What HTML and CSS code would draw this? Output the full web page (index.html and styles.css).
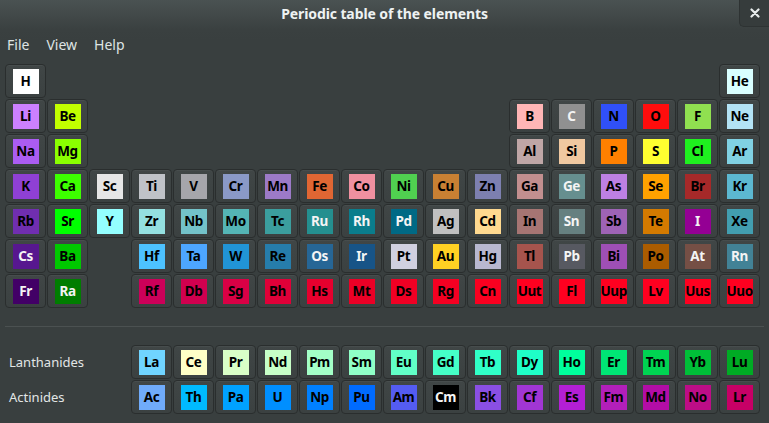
FILE: index.html
```html
<!DOCTYPE html>
<html>
<head>
<meta charset="utf-8">
<title>Periodic table of the elements</title>
<link rel="stylesheet" href="styles.css">
</head>
<body>
<div class="window">
  <header class="titlebar">
    <div></div>
    <div class="title">Periodic table of the elements</div>
    <div class="close"><svg width="10" height="10" viewBox="0 0 10 10"><path d="M1.5 1.5 L8.5 8.5 M8.5 1.5 L1.5 8.5" stroke="#e8ecec" stroke-width="2.2" stroke-linecap="round"/></svg></div>
  </header>
  <nav class="menubar"><span>File</span><span>View</span><span>Help</span></nav>

  <main class="table">
    <div class="el"><span class="sw" style="background:#ffffff">H</span></div>
    <div class="sp16"></div>
    <div class="el"><span class="sw" style="background:#d9ffff">He</span></div>

    <div class="el"><span class="sw" style="background:#cc80ff">Li</span></div>
    <div class="el"><span class="sw" style="background:#c2ff00">Be</span></div>
    <div class="sp10"></div>
    <div class="el"><span class="sw" style="background:#ffb5b5">B</span></div>
    <div class="el"><span class="sw w" style="background:#909090">C</span></div>
    <div class="el"><span class="sw" style="background:#3050f8">N</span></div>
    <div class="el"><span class="sw" style="background:#ff0d0d">O</span></div>
    <div class="el"><span class="sw" style="background:#90e050">F</span></div>
    <div class="el"><span class="sw" style="background:#b3e3f5">Ne</span></div>

    <div class="el"><span class="sw" style="background:#ab5cf2">Na</span></div>
    <div class="el"><span class="sw" style="background:#8aff00">Mg</span></div>
    <div class="sp10"></div>
    <div class="el"><span class="sw" style="background:#bfa6a6">Al</span></div>
    <div class="el"><span class="sw" style="background:#f0c8a0">Si</span></div>
    <div class="el"><span class="sw" style="background:#ff8000">P</span></div>
    <div class="el"><span class="sw" style="background:#ffff30">S</span></div>
    <div class="el"><span class="sw" style="background:#1ff01f">Cl</span></div>
    <div class="el"><span class="sw" style="background:#80d1e3">Ar</span></div>

    <div class="el"><span class="sw" style="background:#8f40d4">K</span></div>
    <div class="el"><span class="sw" style="background:#3dff00">Ca</span></div>
    <div class="el"><span class="sw" style="background:#e6e6e6">Sc</span></div>
    <div class="el"><span class="sw" style="background:#bfc2c7">Ti</span></div>
    <div class="el"><span class="sw" style="background:#a6a6ab">V</span></div>
    <div class="el"><span class="sw" style="background:#8a99c7">Cr</span></div>
    <div class="el"><span class="sw" style="background:#9c7ac7">Mn</span></div>
    <div class="el"><span class="sw" style="background:#e06633">Fe</span></div>
    <div class="el"><span class="sw" style="background:#f090a0">Co</span></div>
    <div class="el"><span class="sw" style="background:#50d050">Ni</span></div>
    <div class="el"><span class="sw" style="background:#c88033">Cu</span></div>
    <div class="el"><span class="sw" style="background:#7d80b0">Zn</span></div>
    <div class="el"><span class="sw" style="background:#c28f8f">Ga</span></div>
    <div class="el"><span class="sw w" style="background:#668f8f">Ge</span></div>
    <div class="el"><span class="sw" style="background:#bd80e3">As</span></div>
    <div class="el"><span class="sw" style="background:#ffa100">Se</span></div>
    <div class="el"><span class="sw" style="background:#a62929">Br</span></div>
    <div class="el"><span class="sw" style="background:#5cb8d1">Kr</span></div>

    <div class="el"><span class="sw" style="background:#702eb0">Rb</span></div>
    <div class="el"><span class="sw" style="background:#00ff00">Sr</span></div>
    <div class="el"><span class="sw" style="background:#94ffff">Y</span></div>
    <div class="el"><span class="sw" style="background:#94e0e0">Zr</span></div>
    <div class="el"><span class="sw" style="background:#73c2c9">Nb</span></div>
    <div class="el"><span class="sw" style="background:#54b5b5">Mo</span></div>
    <div class="el"><span class="sw" style="background:#3b9e9e">Tc</span></div>
    <div class="el"><span class="sw w" style="background:#248f8f">Ru</span></div>
    <div class="el"><span class="sw w" style="background:#0a7d8c">Rh</span></div>
    <div class="el"><span class="sw w" style="background:#006985">Pd</span></div>
    <div class="el"><span class="sw" style="background:#c0c0c0">Ag</span></div>
    <div class="el"><span class="sw" style="background:#ffd98f">Cd</span></div>
    <div class="el"><span class="sw" style="background:#a67573">In</span></div>
    <div class="el"><span class="sw w" style="background:#668080">Sn</span></div>
    <div class="el"><span class="sw" style="background:#9e63b5">Sb</span></div>
    <div class="el"><span class="sw" style="background:#d47a00">Te</span></div>
    <div class="el"><span class="sw w" style="background:#940094">I</span></div>
    <div class="el"><span class="sw" style="background:#429eb0">Xe</span></div>

    <div class="el"><span class="sw w" style="background:#57178f">Cs</span></div>
    <div class="el"><span class="sw" style="background:#00c900">Ba</span></div>
    <div class="sp1"></div>
    <div class="el"><span class="sw" style="background:#4dc2ff">Hf</span></div>
    <div class="el"><span class="sw" style="background:#4da6ff">Ta</span></div>
    <div class="el"><span class="sw" style="background:#2194d6">W</span></div>
    <div class="el"><span class="sw" style="background:#267dab">Re</span></div>
    <div class="el"><span class="sw w" style="background:#266696">Os</span></div>
    <div class="el"><span class="sw w" style="background:#175487">Ir</span></div>
    <div class="el"><span class="sw" style="background:#d0d0e0">Pt</span></div>
    <div class="el"><span class="sw" style="background:#ffd123">Au</span></div>
    <div class="el"><span class="sw" style="background:#b8b8d0">Hg</span></div>
    <div class="el"><span class="sw" style="background:#a6544d">Tl</span></div>
    <div class="el"><span class="sw w" style="background:#575961">Pb</span></div>
    <div class="el"><span class="sw" style="background:#9e4fb5">Bi</span></div>
    <div class="el"><span class="sw" style="background:#ab5c00">Po</span></div>
    <div class="el"><span class="sw w" style="background:#754f45">At</span></div>
    <div class="el"><span class="sw w" style="background:#428296">Rn</span></div>

    <div class="el"><span class="sw w" style="background:#420066">Fr</span></div>
    <div class="el"><span class="sw w" style="background:#007d00">Ra</span></div>
    <div class="sp1"></div>
    <div class="el"><span class="sw" style="background:#cc0059">Rf</span></div>
    <div class="el"><span class="sw" style="background:#d1004f">Db</span></div>
    <div class="el"><span class="sw" style="background:#d90045">Sg</span></div>
    <div class="el"><span class="sw" style="background:#e00038">Bh</span></div>
    <div class="el"><span class="sw" style="background:#e6002e">Hs</span></div>
    <div class="el"><span class="sw" style="background:#eb0026">Mt</span></div>
    <div class="el"><span class="sw" style="background:#f00024">Ds</span></div>
    <div class="el"><span class="sw" style="background:#f50022">Rg</span></div>
    <div class="el"><span class="sw" style="background:#fa0020">Cn</span></div>
    <div class="el"><span class="sw" style="background:#ff0020">Uut</span></div>
    <div class="el"><span class="sw" style="background:#ff0020">Fl</span></div>
    <div class="el"><span class="sw" style="background:#ff0020">Uup</span></div>
    <div class="el"><span class="sw" style="background:#ff0020">Lv</span></div>
    <div class="el"><span class="sw" style="background:#ff0020">Uus</span></div>
    <div class="el"><span class="sw" style="background:#ff0020">Uuo</span></div>
  </main>

  <hr class="sep">

  <section class="table series">
    <div class="label">Lanthanides</div>
    <div class="el"><span class="sw" style="background:#70d4ff">La</span></div>
    <div class="el"><span class="sw" style="background:#ffffc7">Ce</span></div>
    <div class="el"><span class="sw" style="background:#d9ffc7">Pr</span></div>
    <div class="el"><span class="sw" style="background:#c7ffc7">Nd</span></div>
    <div class="el"><span class="sw" style="background:#a3ffc7">Pm</span></div>
    <div class="el"><span class="sw" style="background:#8fffc7">Sm</span></div>
    <div class="el"><span class="sw" style="background:#61ffc7">Eu</span></div>
    <div class="el"><span class="sw" style="background:#45ffc7">Gd</span></div>
    <div class="el"><span class="sw" style="background:#30ffc7">Tb</span></div>
    <div class="el"><span class="sw" style="background:#1fffc7">Dy</span></div>
    <div class="el"><span class="sw" style="background:#00ff9c">Ho</span></div>
    <div class="el"><span class="sw" style="background:#00e675">Er</span></div>
    <div class="el"><span class="sw" style="background:#00d452">Tm</span></div>
    <div class="el"><span class="sw" style="background:#00bf38">Yb</span></div>
    <div class="el"><span class="sw" style="background:#00ab24">Lu</span></div>

    <div class="label">Actinides</div>
    <div class="el"><span class="sw" style="background:#70abfa">Ac</span></div>
    <div class="el"><span class="sw" style="background:#00baff">Th</span></div>
    <div class="el"><span class="sw" style="background:#00a1ff">Pa</span></div>
    <div class="el"><span class="sw" style="background:#008fff">U</span></div>
    <div class="el"><span class="sw" style="background:#0080ff">Np</span></div>
    <div class="el"><span class="sw" style="background:#006bff">Pu</span></div>
    <div class="el"><span class="sw" style="background:#545cf2">Am</span></div>
    <div class="el"><span class="sw w" style="background:#000000">Cm</span></div>
    <div class="el"><span class="sw" style="background:#8a4fe3">Bk</span></div>
    <div class="el"><span class="sw" style="background:#a136d4">Cf</span></div>
    <div class="el"><span class="sw" style="background:#b31fd4">Es</span></div>
    <div class="el"><span class="sw" style="background:#b31fba">Fm</span></div>
    <div class="el"><span class="sw" style="background:#b30da6">Md</span></div>
    <div class="el"><span class="sw" style="background:#bd0d87">No</span></div>
    <div class="el"><span class="sw" style="background:#c70066">Lr</span></div>
  </section>
</div>
</body>
</html>
```

FILE: styles.css
```css
html, body {
  margin: 0;
  padding: 0;
  background: #393f3f;
}
body {
  font-family: "Noto Sans", "DejaVu Sans", sans-serif;
  font-size: 13px;
  color: #e6eaea;
}
.window {
  width: 769px;
  height: 423px;
  overflow: hidden;
  background: linear-gradient(#4a5252 0, #3a4040 30px, #393f3f 40px);
}
.titlebar {
  height: 28px;
  display: grid;
  grid-template-columns: 1fr auto 1fr;
  align-items: start;
}
.title {
  font-weight: bold;
  font-size: 14px;
  line-height: 28px;
  color: #eef2f2;
  letter-spacing: -0.1px;
}
.close {
  justify-self: end;
  width: 30px;
  height: 27px;
  background: #363c3c;
  border-left: 1px solid #2e3333;
  border-bottom: 1px solid #2e3333;
  border-bottom-left-radius: 5px;
  display: flex;
  align-items: center;
  justify-content: center;
  box-sizing: border-box;
}
.menubar {
  height: 32px;
  display: flex;
  align-items: center;
  gap: 17px;
  padding-left: 7px;
  font-size: 14px;
  color: #dfe4e4;
}
.table {
  display: grid;
  grid-template-columns: repeat(18, 41px);
  grid-auto-rows: 34px;
  gap: 1px;
  padding: 4px 0 0 5px;
}
.sp16 { grid-column: span 16; }
.sp10 { grid-column: span 10; }
.sp1 { grid-column: span 1; }
.el {
  box-sizing: border-box;
  background: linear-gradient(#404646, #3b4141);
  border: 1px solid #2a2e2e;
  border-radius: 4px;
  box-shadow: inset 0 1px rgba(255,255,255,0.04);
  display: flex;
  align-items: center;
  justify-content: center;
}
.sw {
  width: 26px;
  height: 25px;
  line-height: 25px;
  text-align: center;
  font-weight: bold;
  font-size: 13.5px;
  color: #000;
  letter-spacing: -0.4px;
  white-space: nowrap;
}
.sw.w { color: #f4f4f4; }
.sep {
  margin: 18px 5px 0 5px;
  border: 0;
  height: 1px;
  background: #4b5151;
}
.series {
  padding-top: 18px;
}
.label {
  grid-column: span 3;
  display: flex;
  align-items: center;
  padding-left: 4px;
  color: #e2e6e6;
}
```
